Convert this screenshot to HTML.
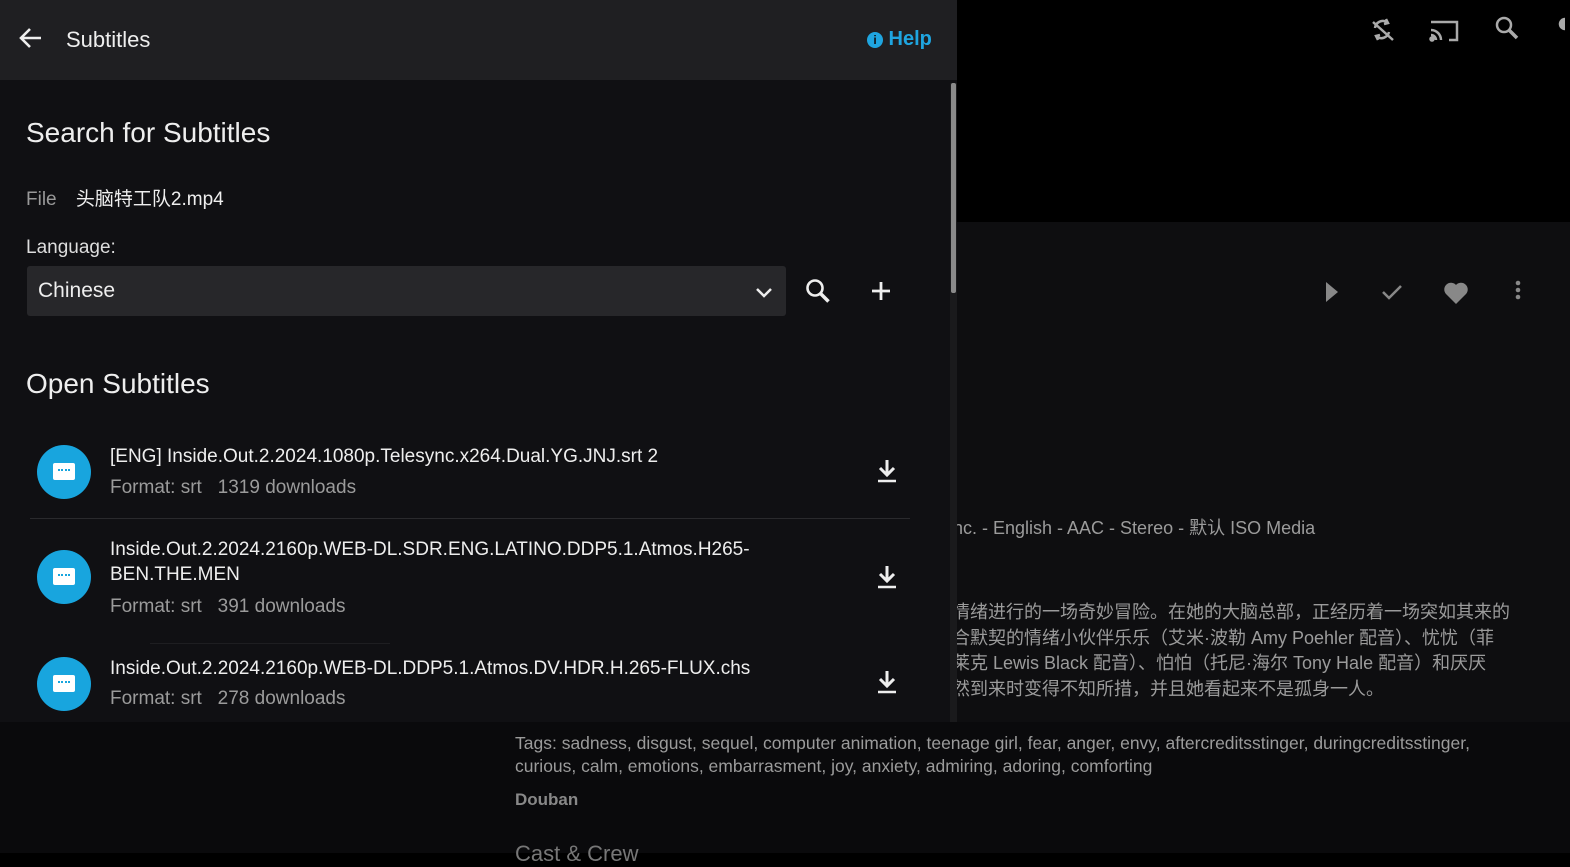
<!DOCTYPE html>
<html><head><meta charset="utf-8"><style>
*{margin:0;padding:0;box-sizing:border-box}
body{width:1570px;height:853px;overflow:hidden;background:#000;font-family:"Liberation Sans","Noto Sans CJK SC",sans-serif;position:relative;color:#eee}
.abs{position:absolute}
.bg2{left:957px;top:222px;width:613px;height:500px;background:#0e0e10}
.bg3{left:0;top:722px;width:1570px;height:131px;background:#0a0a0c}
.gray{color:#9b9b9b;font-size:18px;white-space:nowrap}
.dlg{left:0;top:0;width:957px;height:722px;background:#101013}
.hdr{left:0;top:0;width:957px;height:80px;background:#1f1f22}
.sb{left:950px;top:83px;width:7px;height:639px;background:#1a1a1c}
.thumb{left:951px;top:83px;width:5px;height:210px;background:#8a8a8a;border-radius:2px}
.item{left:26px;width:884px}
.ic{position:absolute;left:11px;width:54px;height:54px;border-radius:50%;background:#18a5de}
.ic:after{content:"";position:absolute;left:16px;top:18px;width:22px;height:17px;background:#fff;border-radius:2px}
.ic:before{content:"";position:absolute;left:21px;top:24px;width:12px;height:4px;border-top:2px dotted #18a5de;z-index:1}
.t{position:absolute;left:84px;font-size:19px;color:#eee;line-height:25px;white-space:nowrap}
.m{position:absolute;left:84px;font-size:19px;color:#9b9b9b;white-space:nowrap}
.dl{position:absolute;left:850px}
</style></head><body>
<div class="abs bg2"></div>
<div class="abs bg3"></div>
<svg class="abs" style="left:1365px;top:14px" width="200" height="30" viewBox="0 0 200 30" fill="none" stroke="#aaa" stroke-width="2.5">
<path d="M8 8 L28 26 M10 14a8 8 0 0 1 12-6 M24 18a8 8 0 0 1-12 5 M21 5l2 4-4 1 M13 26l-2-4 4-1"/>
<path d="M66 8h26v18h-8"/><path d="M66 16a10 10 0 0 1 10 10 M66 21a5 5 0 0 1 5 5"/><circle cx="67" cy="25" r="1.5" fill="#aaa"/>
<circle cx="139" cy="11" r="7"/><path d="M144 16l8 8" stroke-width="3.5"/>
<circle cx="200" cy="10" r="5" fill="#aaa"/>
</svg>
<svg class="abs" style="left:1320px;top:278px" width="215" height="28" viewBox="0 0 215 28">
<path d="M6 4l12 10-12 10z" fill="#888"/>
<path d="M63 14l6 6 12-12" stroke="#888" stroke-width="2.5" fill="none"/>
<path d="M136 26l-10-10a6 6 0 0 1 10-9a6 6 0 0 1 10 9z" fill="#888"/>
<circle cx="198" cy="5" r="2.3" fill="#888"/><circle cx="198" cy="12" r="2.3" fill="#888"/><circle cx="198" cy="19" r="2.3" fill="#888"/>
</svg>
<div class="abs gray" style="left:948px;top:514px">Inc. - English - AAC - Stereo - 默认 ISO Media</div>
<div class="abs gray" style="left:934px;top:600px;line-height:25.6px">的情绪进行的一场奇妙冒险。在她的大脑总部，正经历着一场突如其来的<br>配合默契的情绪小伙伴乐乐（艾米·波勒 Amy Poehler 配音）、忧忧（菲<br>布莱克 Lewis Black 配音）、怕怕（托尼·海尔 Tony Hale 配音）和厌厌<br>突然到来时变得不知所措，并且她看起来不是孤身一人。</div>
<div class="abs gray" style="left:515px;top:732px;line-height:23px;font-size:17.5px">Tags: sadness, disgust, sequel, computer animation, teenage girl, fear, anger, envy, aftercreditsstinger, duringcreditsstinger,<br>curious, calm, emotions, embarrasment, joy, anxiety, admiring, adoring, comforting</div>
<div class="abs gray" style="left:515px;top:790px;font-weight:bold;font-size:17px;color:#888">Douban</div>
<div class="abs gray" style="left:515px;top:841px;font-size:22px;color:#777">Cast &amp; Crew</div>

<div class="abs dlg"></div>
<div class="abs hdr"></div>
<svg class="abs" style="left:18px;top:26px" width="26" height="24" viewBox="0 0 26 24"><path d="M23 12H4 M12 3l-9 9 9 9" stroke="#eee" stroke-width="2.6" fill="none"/></svg>
<div class="abs" style="left:66px;top:27px;font-size:22px;color:#eee">Subtitles</div>
<div class="abs" style="left:867px;top:28px;font-size:20px;font-weight:bold;color:#1fa5e0"><span style="display:inline-block;width:16px;height:16px;border-radius:50%;background:#1fa5e0;color:#101013;font-size:12px;text-align:center;line-height:16px;vertical-align:1px">i</span> Help</div>
<div class="abs sb"></div><div class="abs thumb"></div>
<div class="abs" style="left:26px;top:117px;font-size:28px;color:#eee">Search for Subtitles</div>
<div class="abs" style="left:26px;top:184px;font-size:19px;color:#999">File <span style="color:#eee;margin-left:14px">头脑特工队2.mp4</span></div>
<div class="abs" style="left:26px;top:237px;font-size:19px;color:#ddd">Language:</div>
<div class="abs" style="left:27px;top:266px;width:759px;height:50px;background:#27272a;border-radius:3px"></div>
<div class="abs" style="left:38px;top:279px;font-size:21px;color:#eee">Chinese</div>
<svg class="abs" style="left:754px;top:284px" width="20" height="16"><path d="M3 5l7 7 7-7" stroke="#eee" stroke-width="2.5" fill="none"/></svg>
<svg class="abs" style="left:804px;top:277px" width="28" height="28"><circle cx="11" cy="11" r="7.5" stroke="#eee" stroke-width="2.6" fill="none"/><path d="M16.5 16.5l8 8" stroke="#eee" stroke-width="3.5"/></svg>
<svg class="abs" style="left:869px;top:279px" width="24" height="24"><path d="M12 3v18M3 12h18" stroke="#eee" stroke-width="2.8"/></svg>
<div class="abs" style="left:26px;top:368px;font-size:28px;color:#eee">Open Subtitles</div>

<div class="abs item" style="top:441px;height:78px">
<div class="ic" style="top:4px"></div>
<div class="t" style="top:3px">[ENG] Inside.Out.2.2024.1080p.Telesync.x264.Dual.YG.JNJ.srt 2</div>
<div class="m" style="top:36px">Format: srt&nbsp;&nbsp;&nbsp;1319 downloads</div>
<svg class="dl" style="top:17px" width="22" height="26"><path d="M11 2v14M4 10l7 7 7-7" stroke="#eee" stroke-width="3" fill="none"/><path d="M2 23h18" stroke="#eee" stroke-width="2.5"/></svg>
</div>
<div class="abs" style="left:30px;top:518px;width:880px;height:1px;background:#2a2a2d"></div>
<div class="abs item" style="top:537px;height:100px">
<div class="ic" style="top:13px"></div>
<div class="t" style="top:0px">Inside.Out.2.2024.2160p.WEB-DL.SDR.ENG.LATINO.DDP5.1.Atmos.H265-<br>BEN.THE.MEN</div>
<div class="m" style="top:59px">Format: srt&nbsp;&nbsp;&nbsp;391 downloads</div>
<svg class="dl" style="top:27px" width="22" height="26"><path d="M11 2v14M4 10l7 7 7-7" stroke="#eee" stroke-width="3" fill="none"/><path d="M2 23h18" stroke="#eee" stroke-width="2.5"/></svg>
</div>
<div class="abs" style="left:150px;top:643px;width:240px;height:1px;background:#1e1e21"></div>
<div class="abs item" style="top:656px;height:66px">
<div class="ic" style="top:1px"></div>
<div class="t" style="top:0px">Inside.Out.2.2024.2160p.WEB-DL.DDP5.1.Atmos.DV.HDR.H.265-FLUX.chs</div>
<div class="m" style="top:32px">Format: srt&nbsp;&nbsp;&nbsp;278 downloads</div>
<svg class="dl" style="top:13px" width="22" height="26"><path d="M11 2v14M4 10l7 7 7-7" stroke="#eee" stroke-width="3" fill="none"/><path d="M2 23h18" stroke="#eee" stroke-width="2.5"/></svg>
</div>
</body></html>
